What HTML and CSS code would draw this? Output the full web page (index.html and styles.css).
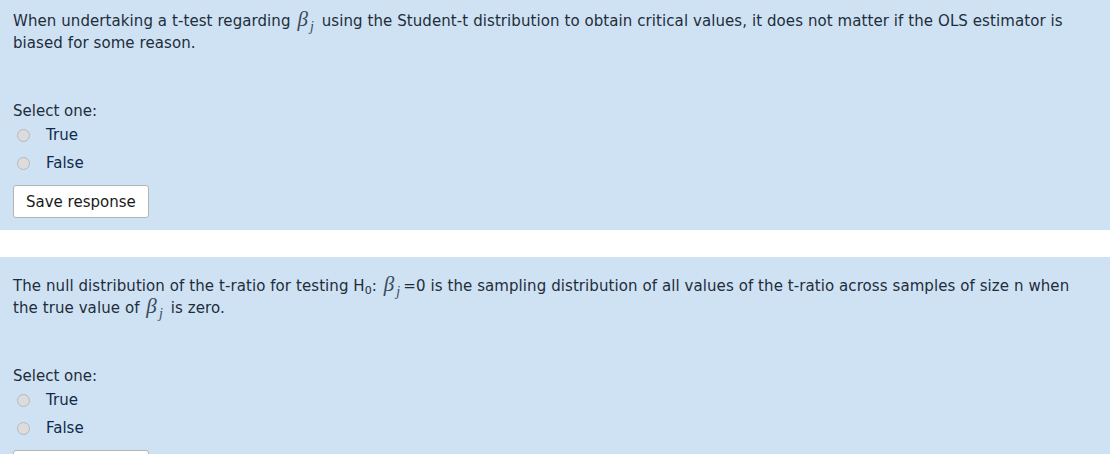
FILE: index.html
```html
<!DOCTYPE html>
<html>
<head>
<meta charset="utf-8">
<link rel="stylesheet" href="styles.css">
</head>
<body>
<div class="que">
  <div class="qtext">When undertaking a t-test regarding <span class="math">β<sub>j</sub></span> using the Student-t distribution to obtain critical values, it does not matter if the OLS estimator is biased for some reason.</div>
  <div class="ablock">
    <div class="prompt">Select one:</div>
    <label class="opt"><span class="radio"></span><span class="lbl">True</span></label>
    <label class="opt"><span class="radio"></span><span class="lbl">False</span></label>
  </div>
  <button class="save">Save response</button>
</div>
<div class="que">
  <div class="qtext">The null distribution of the t-ratio for testing H<sub class="h">0</sub>: <span class="math">β<sub>j</sub></span>=0 is the sampling distribution of all values of the t-ratio across samples of size n when the true value of <span class="math">β<sub>j</sub></span> is zero.</div>
  <div class="ablock">
    <div class="prompt">Select one:</div>
    <label class="opt"><span class="radio"></span><span class="lbl">True</span></label>
    <label class="opt"><span class="radio"></span><span class="lbl">False</span></label>
  </div>
  <button class="save">Save response</button>
</div>
</body>
</html>
```
FILE: styles.css
```css
html, body {
  margin: 0;
  padding: 0;
  background: #ffffff;
}
body {
  margin-top: -8px;
  font-family: "DejaVu Sans", Verdana, sans-serif;
  font-size: 15px;
  color: #1f2d3b;
}
.que {
  background: #cee2f3;
  padding: 18px 30px 12px 13px;
  margin-bottom: 27px;
}
.qtext {
  line-height: 22px;
  min-height: 91px;
  letter-spacing: 0.08px;
}
.math {
  font-family: "Liberation Serif", "DejaVu Serif", serif;
  font-style: italic;
  font-size: 21px;
  line-height: 0;
  color: #3b4a5a;
  padding: 0 3px 0 2px;
}
.math sub {
  font-size: 14px;
  vertical-align: -5px;
  line-height: 0;
  padding-left: 2px;
}
sub.h {
  font-size: 11px;
  vertical-align: -3px;
  line-height: 0;
}
.ablock {
  color: #102a4c;
}
.prompt {
  line-height: 20px;
  color: #1f2d3b;
}
.opt {
  display: flex;
  align-items: center;
  height: 28px;
}
.radio {
  width: 11px;
  height: 11px;
  border-radius: 50%;
  border: 1px solid #b8b8b8;
  background: #dcdcdc;
  margin-left: 4px;
  margin-right: 16px;
  box-sizing: content-box;
}
.lbl {
  line-height: 20px;
}
.save {
  display: block;
  margin-top: 8px;
  font-family: "DejaVu Sans", Verdana, sans-serif;
  font-size: 15px;
  color: #1a1a1a;
  background: #ffffff;
  border: 1px solid #b4b4b4;
  border-radius: 3px;
  height: 33px;
  padding: 0 12px;
}
```
